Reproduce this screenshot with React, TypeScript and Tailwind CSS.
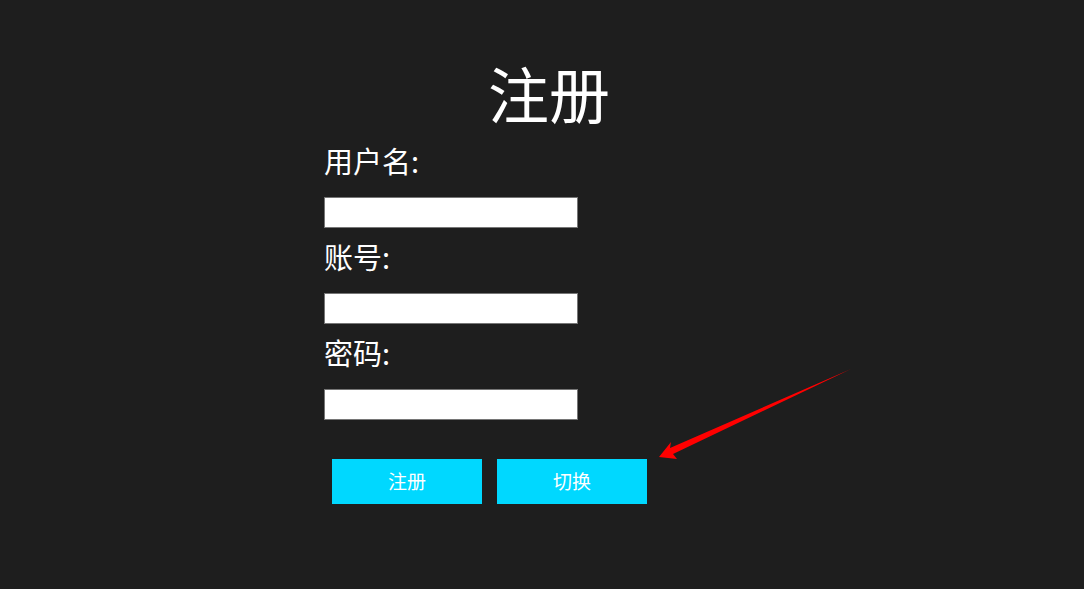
import React from "react";

const font = { fontFamily: '"Noto Sans CJK SC", "Noto Sans", sans-serif' };

function Field({ label }: { label: string }) {
  return (
    <div className="flex flex-col">
      <div className="h-[40px] text-[29px] leading-[40px] text-white">{label}</div>
      <input className="mt-[17px] h-[31px] w-[254px] border border-[#767676] bg-white outline-none" />
    </div>
  );
}

export default function App() {
  return (
    <div className="relative h-[589px] w-[1084px] overflow-hidden bg-[#1e1e1e]" style={font}>
      <div className="ml-[324px] flex w-[450px] flex-col pt-[53px]">
        <h1 className="h-[80px] text-center text-[61px] leading-[80px] text-white">注册</h1>
        <div className="mt-[7px] flex flex-col gap-[8px]">
          <Field label="用户名:" />
          <Field label="账号:" />
          <Field label="密码:" />
        </div>
        <div className="mt-[39px] flex gap-[15px] pl-[8px]">
          <button className="h-[45px] w-[150px] bg-[#00d8ff] text-[19px] text-white">注册</button>
          <button className="h-[45px] w-[150px] bg-[#00d8ff] text-[19px] text-white">切换</button>
        </div>
      </div>
      <svg className="pointer-events-none absolute left-0 top-0" width="1084" height="589">
        <polygon
          points="659,457 671,442 670,448 851,369 673,454 677,459"
          fill="#ff0000"
        />
      </svg>
    </div>
  );
}
